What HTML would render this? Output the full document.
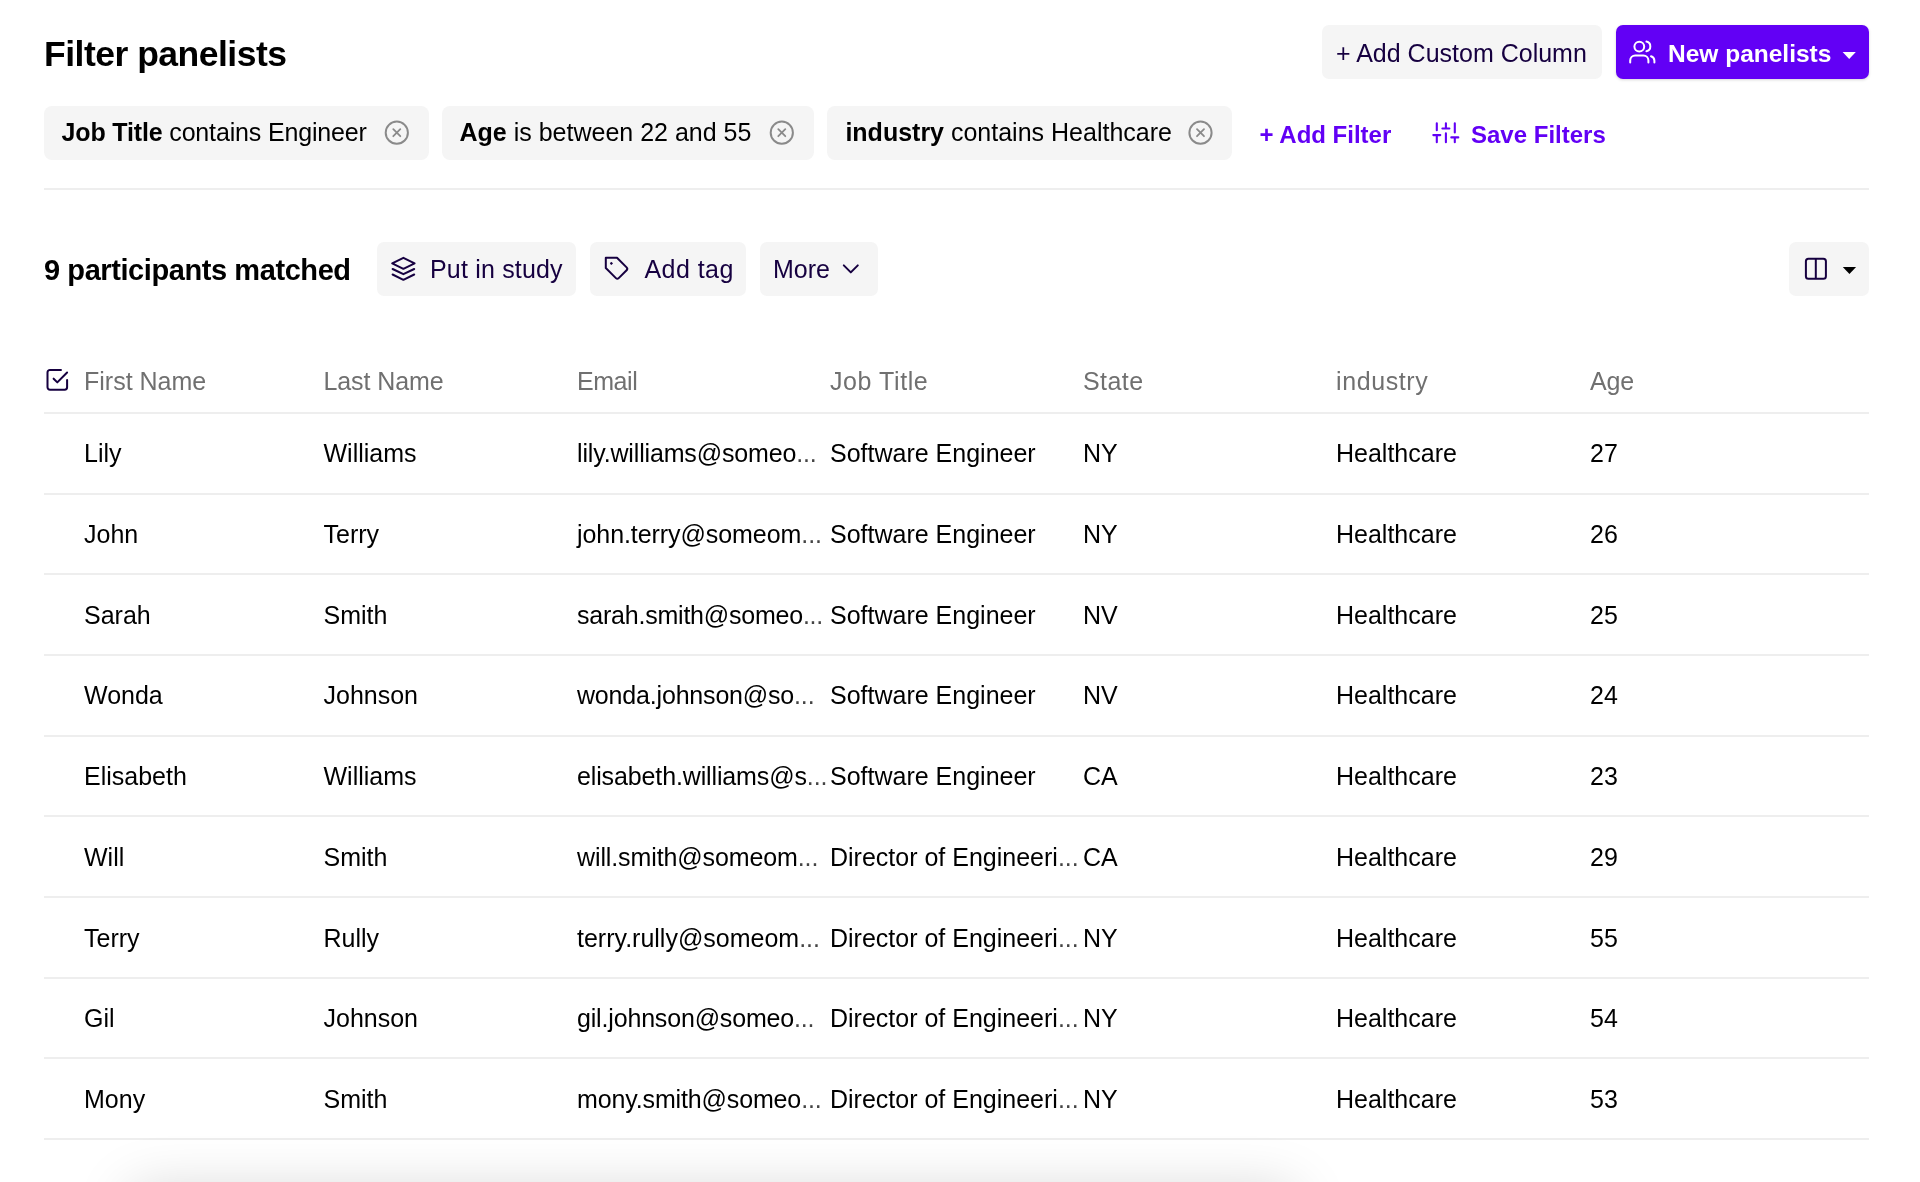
<!DOCTYPE html>
<html><head><meta charset='utf-8'><title>Filter panelists</title>
<style>
html,body{margin:0;padding:0;background:#fff;width:1920px;height:1182px;overflow:hidden;}
body{position:relative;font-family:"Liberation Sans",sans-serif;}
.t{position:absolute;white-space:nowrap;}
body{will-change:transform;}
.b{position:absolute;}
b{font-weight:700;}
</style></head><body>
<div class='t' style='left:44.00px;top:33.69px;font-size:35.5px;line-height:40px;color:#000;font-weight:700;letter-spacing:-0.5px;'>Filter panelists</div>
<div class='b' style='left:1321.50px;top:25.00px;width:280.20px;height:54.00px;background:#f5f5f5;border-radius:7px;'></div>
<div class='t' style='left:1336.00px;top:38.33px;font-size:25px;line-height:30px;color:#160040;'>+ Add Custom Column</div>
<div class='b' style='left:1615.50px;top:25.00px;width:253.80px;height:54.00px;background:#6200f5;border-radius:7px;box-shadow:0 1px 3px rgba(0,0,0,.16);'></div>
<svg class='b' style='left:1625px;top:36px' width='36' height='32' viewBox='1625 36 36 32' fill='none' stroke='#fff' stroke-width='2' stroke-linecap='round'>
<circle cx='1639.3' cy='46.6' r='4.9'/>
<path d='M1630.2 62.4v-1.8a5 5 0 0 1 5-5h8.2a5 5 0 0 1 5 5v1.8'/>
<path d='M1646.4 41.6a4.9 4.9 0 0 1 0 9.6'/>
<path d='M1651 56.2a5 5 0 0 1 3.4 4.6v1.6'/>
</svg>
<div class='t' style='left:1668.00px;top:38.51px;font-size:24.5px;line-height:30px;color:#fff;font-weight:700;'>New panelists</div>
<svg class='b' style='left:1842px;top:51px' width='15' height='9' viewBox='0 0 15 9'><path d='M0.6 0.9h13.2l-6.6 7.1z' fill='#fff'/></svg>
<div class='b' style='left:44.00px;top:106.00px;width:384.60px;height:54.00px;background:#f5f5f5;border-radius:8px;'></div>
<div class='t' style='left:61.60px;top:117.43px;font-size:25px;line-height:30px;color:#000;letter-spacing:-0.16px;'><b>Job Title</b> contains Engineer</div>
<svg class='b' style='left:383px;top:119px' width='26' height='26' viewBox='0 0 26 26' fill='none' stroke='#8a8a8a' stroke-width='2' stroke-linecap='round'><circle cx='13.80' cy='13.70' r='11.1'/><path stroke-width='1.8' d='M10.30 10.20l7 7M17.30 10.20l-7 7'/></svg>
<div class='b' style='left:442.00px;top:106.00px;width:371.75px;height:54.00px;background:#f5f5f5;border-radius:8px;'></div>
<div class='t' style='left:459.50px;top:117.43px;font-size:25px;line-height:30px;color:#000;'><b>Age</b> is between 22 and 55</div>
<svg class='b' style='left:768px;top:119px' width='26' height='26' viewBox='0 0 26 26' fill='none' stroke='#8a8a8a' stroke-width='2' stroke-linecap='round'><circle cx='13.80' cy='13.70' r='11.1'/><path stroke-width='1.8' d='M10.30 10.20l7 7M17.30 10.20l-7 7'/></svg>
<div class='b' style='left:827.30px;top:106.00px;width:404.70px;height:54.00px;background:#f5f5f5;border-radius:8px;'></div>
<div class='t' style='left:845.40px;top:117.43px;font-size:25px;line-height:30px;color:#000;'><b>industry</b> contains Healthcare</div>
<svg class='b' style='left:1187px;top:119px' width='26' height='26' viewBox='0 0 26 26' fill='none' stroke='#8a8a8a' stroke-width='2' stroke-linecap='round'><circle cx='13.50' cy='13.70' r='11.1'/><path stroke-width='1.8' d='M10.00 10.20l7 7M17.00 10.20l-7 7'/></svg>
<div class='t' style='left:1259.50px;top:120.08px;font-size:24px;line-height:30px;color:#6200f5;font-weight:700;'>+ Add Filter</div>
<svg class='b' style='left:1428px;top:118px' width='36' height='30' viewBox='1428 118 36 30' fill='none' stroke='#6200f5' stroke-width='2.1' stroke-linecap='round'>
<path d='M1436.8 123.2v7.1M1433.3 135.1h7M1436.8 135.1v7.1'/>
<path d='M1445.9 123.2v5.3M1442.4 128.5h7M1445.9 133.4v8.8'/>
<path d='M1454.8 123.2v9.2M1451.3 137.4h7M1454.8 137.4v4.8'/>
</svg>
<div class='t' style='left:1471.00px;top:120.08px;font-size:24px;line-height:30px;color:#6200f5;font-weight:700;'>Save Filters</div>
<div class='b' style='left:44.00px;top:188.00px;width:1825.00px;height:2.00px;background:#eeeeee;border-radius:0px;'></div>
<div class='t' style='left:44.00px;top:252.55px;font-size:29px;line-height:34px;color:#000;font-weight:700;letter-spacing:-0.42px;'>9 participants matched</div>
<div class='b' style='left:376.90px;top:242.00px;width:199.35px;height:53.60px;background:#f5f5f5;border-radius:7px;'></div>
<svg class='b' style='left:388px;top:253px' width='30' height='32' viewBox='388 253 30 32' fill='none' stroke='#160040' stroke-width='2' stroke-linejoin='round' stroke-linecap='round'>
<path d='M403.4 257.8l11.2 5.6l-11.2 5.4l-11.2-5.4z'/>
<path d='M392.6 269l10.8 5.2l10.8-5.2'/>
<path d='M392.6 274.5l10.8 5.3l10.8-5.3'/>
</svg>
<div class='t' style='left:430.00px;top:253.53px;font-size:25px;line-height:30px;color:#160040;letter-spacing:0.18px;'>Put in study</div>
<div class='b' style='left:590.30px;top:242.00px;width:155.70px;height:53.60px;background:#f5f5f5;border-radius:7px;'></div>
<svg class='b' style='left:600px;top:252px' width='32' height='32' viewBox='600 252 32 32' fill='none' stroke='#160040' stroke-width='2' stroke-linejoin='round'>
<path d='M605.8 257.8h11.2l9.6 9.6a2 2 0 0 1 0 2.8l-7.9 7.9a2 2 0 0 1 -2.8 0l-10.1-10.1z'/>
<circle cx='611.4' cy='263.4' r='0.9' fill='#160040' stroke-width='1'/>
</svg>
<div class='t' style='left:644.50px;top:253.53px;font-size:25px;line-height:30px;color:#160040;letter-spacing:0.45px;'>Add tag</div>
<div class='b' style='left:760.20px;top:242.00px;width:117.60px;height:53.60px;background:#f5f5f5;border-radius:7px;'></div>
<div class='t' style='left:773.00px;top:253.53px;font-size:25px;line-height:30px;color:#160040;'>More</div>
<svg class='b' style='left:840px;top:261px' width='22' height='16' viewBox='840 261 22 16' fill='none' stroke='#160040' stroke-width='2' stroke-linecap='round' stroke-linejoin='round'><path d='M843.8 265.4l7 7l7-7'/></svg>
<div class='b' style='left:1788.90px;top:242.00px;width:80.20px;height:53.70px;background:#f5f5f5;border-radius:7px;'></div>
<svg class='b' style='left:1802px;top:255px' width='28' height='28' viewBox='1802 255 28 28' fill='none' stroke='#160040' stroke-width='2'><rect x='1805.9' y='258.8' width='20' height='20' rx='2.5'/><path d='M1815.8 258.8v20'/></svg>
<svg class='b' style='left:1842px;top:266px' width='15' height='9' viewBox='0 0 15 9'><path d='M0.8 1h13.3l-6.65 7.1z' fill='#000'/></svg>
<svg class='b' style='left:42px;top:364px' width='32' height='32' viewBox='42 364 32 32' fill='none' stroke='#160040' stroke-width='1.65' stroke-linecap='round' stroke-linejoin='round'><g transform='translate(42.6 365.2) scale(1.225)'><path d='M9 11l3 3l8 -8'/><path d='M20 12v6a2 2 0 0 1 -2 2h-12a2 2 0 0 1 -2 -2v-12a2 2 0 0 1 2 -2h9'/></g></svg>
<div class='t' style='left:84.00px;top:366.33px;font-size:25px;line-height:30px;color:#707070;'>First Name</div>
<div class='t' style='left:323.50px;top:366.33px;font-size:25px;line-height:30px;color:#707070;letter-spacing:-0.1px;'>Last Name</div>
<div class='t' style='left:577.00px;top:366.33px;font-size:25px;line-height:30px;color:#707070;letter-spacing:-0.45px;'>Email</div>
<div class='t' style='left:830.00px;top:366.33px;font-size:25px;line-height:30px;color:#707070;letter-spacing:0.58px;'>Job Title</div>
<div class='t' style='left:1083.00px;top:366.33px;font-size:25px;line-height:30px;color:#707070;letter-spacing:0.45px;'>State</div>
<div class='t' style='left:1336.00px;top:366.33px;font-size:25px;line-height:30px;color:#707070;letter-spacing:0.6px;'>industry</div>
<div class='t' style='left:1590.00px;top:366.33px;font-size:25px;line-height:30px;color:#707070;letter-spacing:-0.2px;'>Age</div>
<div class='b' style='left:44.00px;top:412.00px;width:1825.00px;height:2.00px;background:#eeeeee;border-radius:0px;'></div>
<div class='t' style='left:84.00px;top:438.43px;font-size:25px;line-height:30px;color:#000;'>Lily</div>
<div class='t' style='left:323.50px;top:438.43px;font-size:25px;line-height:30px;color:#000;'>Williams</div>
<div class='t' style='left:577.00px;top:438.43px;font-size:25px;line-height:30px;color:#000;letter-spacing:-0.157px;'>lily.williams@someo<span style='color:#444'>...</span></div>
<div class='t' style='left:830.00px;top:438.43px;font-size:25px;line-height:30px;color:#000;'>Software Engineer</div>
<div class='t' style='left:1083.00px;top:438.43px;font-size:25px;line-height:30px;color:#000;'>NY</div>
<div class='t' style='left:1336.00px;top:438.43px;font-size:25px;line-height:30px;color:#000;'>Healthcare</div>
<div class='t' style='left:1590.00px;top:438.43px;font-size:25px;line-height:30px;color:#000;'>27</div>
<div class='b' style='left:44.00px;top:493.00px;width:1825.00px;height:2.00px;background:#eeeeee;border-radius:0px;'></div>
<div class='t' style='left:84.00px;top:519.11px;font-size:25px;line-height:30px;color:#000;'>John</div>
<div class='t' style='left:323.50px;top:519.11px;font-size:25px;line-height:30px;color:#000;'>Terry</div>
<div class='t' style='left:577.00px;top:519.11px;font-size:25px;line-height:30px;color:#000;letter-spacing:-0.07px;'>john.terry@someom<span style='color:#444'>...</span></div>
<div class='t' style='left:830.00px;top:519.11px;font-size:25px;line-height:30px;color:#000;'>Software Engineer</div>
<div class='t' style='left:1083.00px;top:519.11px;font-size:25px;line-height:30px;color:#000;'>NY</div>
<div class='t' style='left:1336.00px;top:519.11px;font-size:25px;line-height:30px;color:#000;'>Healthcare</div>
<div class='t' style='left:1590.00px;top:519.11px;font-size:25px;line-height:30px;color:#000;'>26</div>
<div class='b' style='left:44.00px;top:573.00px;width:1825.00px;height:2.00px;background:#eeeeee;border-radius:0px;'></div>
<div class='t' style='left:84.00px;top:599.79px;font-size:25px;line-height:30px;color:#000;'>Sarah</div>
<div class='t' style='left:323.50px;top:599.79px;font-size:25px;line-height:30px;color:#000;'>Smith</div>
<div class='t' style='left:577.00px;top:599.79px;font-size:25px;line-height:30px;color:#000;letter-spacing:-0.22px;'>sarah.smith@someo<span style='color:#444'>...</span></div>
<div class='t' style='left:830.00px;top:599.79px;font-size:25px;line-height:30px;color:#000;'>Software Engineer</div>
<div class='t' style='left:1083.00px;top:599.79px;font-size:25px;line-height:30px;color:#000;'>NV</div>
<div class='t' style='left:1336.00px;top:599.79px;font-size:25px;line-height:30px;color:#000;'>Healthcare</div>
<div class='t' style='left:1590.00px;top:599.79px;font-size:25px;line-height:30px;color:#000;'>25</div>
<div class='b' style='left:44.00px;top:654.00px;width:1825.00px;height:2.00px;background:#eeeeee;border-radius:0px;'></div>
<div class='t' style='left:84.00px;top:680.47px;font-size:25px;line-height:30px;color:#000;'>Wonda</div>
<div class='t' style='left:323.50px;top:680.47px;font-size:25px;line-height:30px;color:#000;'>Johnson</div>
<div class='t' style='left:577.00px;top:680.47px;font-size:25px;line-height:30px;color:#000;letter-spacing:-0.18px;'>wonda.johnson@so<span style='color:#444'>...</span></div>
<div class='t' style='left:830.00px;top:680.47px;font-size:25px;line-height:30px;color:#000;'>Software Engineer</div>
<div class='t' style='left:1083.00px;top:680.47px;font-size:25px;line-height:30px;color:#000;'>NV</div>
<div class='t' style='left:1336.00px;top:680.47px;font-size:25px;line-height:30px;color:#000;'>Healthcare</div>
<div class='t' style='left:1590.00px;top:680.47px;font-size:25px;line-height:30px;color:#000;'>24</div>
<div class='b' style='left:44.00px;top:735.00px;width:1825.00px;height:2.00px;background:#eeeeee;border-radius:0px;'></div>
<div class='t' style='left:84.00px;top:761.15px;font-size:25px;line-height:30px;color:#000;'>Elisabeth</div>
<div class='t' style='left:323.50px;top:761.15px;font-size:25px;line-height:30px;color:#000;'>Williams</div>
<div class='t' style='left:577.00px;top:761.15px;font-size:25px;line-height:30px;color:#000;letter-spacing:-0.13px;'>elisabeth.williams@s<span style='color:#444'>...</span></div>
<div class='t' style='left:830.00px;top:761.15px;font-size:25px;line-height:30px;color:#000;'>Software Engineer</div>
<div class='t' style='left:1083.00px;top:761.15px;font-size:25px;line-height:30px;color:#000;'>CA</div>
<div class='t' style='left:1336.00px;top:761.15px;font-size:25px;line-height:30px;color:#000;'>Healthcare</div>
<div class='t' style='left:1590.00px;top:761.15px;font-size:25px;line-height:30px;color:#000;'>23</div>
<div class='b' style='left:44.00px;top:815.00px;width:1825.00px;height:2.00px;background:#eeeeee;border-radius:0px;'></div>
<div class='t' style='left:84.00px;top:841.83px;font-size:25px;line-height:30px;color:#000;'>Will</div>
<div class='t' style='left:323.50px;top:841.83px;font-size:25px;line-height:30px;color:#000;'>Smith</div>
<div class='t' style='left:577.00px;top:841.83px;font-size:25px;line-height:30px;color:#000;letter-spacing:-0.11px;'>will.smith@someom<span style='color:#444'>...</span></div>
<div class='t' style='left:830.00px;top:841.83px;font-size:25px;line-height:30px;color:#000;'>Director of Engineeri<span style='color:#444'>...</span></div>
<div class='t' style='left:1083.00px;top:841.83px;font-size:25px;line-height:30px;color:#000;'>CA</div>
<div class='t' style='left:1336.00px;top:841.83px;font-size:25px;line-height:30px;color:#000;'>Healthcare</div>
<div class='t' style='left:1590.00px;top:841.83px;font-size:25px;line-height:30px;color:#000;'>29</div>
<div class='b' style='left:44.00px;top:896.00px;width:1825.00px;height:2.00px;background:#eeeeee;border-radius:0px;'></div>
<div class='t' style='left:84.00px;top:922.51px;font-size:25px;line-height:30px;color:#000;'>Terry</div>
<div class='t' style='left:323.50px;top:922.51px;font-size:25px;line-height:30px;color:#000;'>Rully</div>
<div class='t' style='left:577.00px;top:922.51px;font-size:25px;line-height:30px;color:#000;'>terry.rully@someom<span style='color:#444'>...</span></div>
<div class='t' style='left:830.00px;top:922.51px;font-size:25px;line-height:30px;color:#000;'>Director of Engineeri<span style='color:#444'>...</span></div>
<div class='t' style='left:1083.00px;top:922.51px;font-size:25px;line-height:30px;color:#000;'>NY</div>
<div class='t' style='left:1336.00px;top:922.51px;font-size:25px;line-height:30px;color:#000;'>Healthcare</div>
<div class='t' style='left:1590.00px;top:922.51px;font-size:25px;line-height:30px;color:#000;'>55</div>
<div class='b' style='left:44.00px;top:977.00px;width:1825.00px;height:2.00px;background:#eeeeee;border-radius:0px;'></div>
<div class='t' style='left:84.00px;top:1003.19px;font-size:25px;line-height:30px;color:#000;'>Gil</div>
<div class='t' style='left:323.50px;top:1003.19px;font-size:25px;line-height:30px;color:#000;'>Johnson</div>
<div class='t' style='left:577.00px;top:1003.19px;font-size:25px;line-height:30px;color:#000;letter-spacing:-0.17px;'>gil.johnson@someo<span style='color:#444'>...</span></div>
<div class='t' style='left:830.00px;top:1003.19px;font-size:25px;line-height:30px;color:#000;'>Director of Engineeri<span style='color:#444'>...</span></div>
<div class='t' style='left:1083.00px;top:1003.19px;font-size:25px;line-height:30px;color:#000;'>NY</div>
<div class='t' style='left:1336.00px;top:1003.19px;font-size:25px;line-height:30px;color:#000;'>Healthcare</div>
<div class='t' style='left:1590.00px;top:1003.19px;font-size:25px;line-height:30px;color:#000;'>54</div>
<div class='b' style='left:44.00px;top:1057.00px;width:1825.00px;height:2.00px;background:#eeeeee;border-radius:0px;'></div>
<div class='t' style='left:84.00px;top:1083.87px;font-size:25px;line-height:30px;color:#000;'>Mony</div>
<div class='t' style='left:323.50px;top:1083.87px;font-size:25px;line-height:30px;color:#000;'>Smith</div>
<div class='t' style='left:577.00px;top:1083.87px;font-size:25px;line-height:30px;color:#000;letter-spacing:-0.14px;'>mony.smith@someo<span style='color:#444'>...</span></div>
<div class='t' style='left:830.00px;top:1083.87px;font-size:25px;line-height:30px;color:#000;'>Director of Engineeri<span style='color:#444'>...</span></div>
<div class='t' style='left:1083.00px;top:1083.87px;font-size:25px;line-height:30px;color:#000;'>NY</div>
<div class='t' style='left:1336.00px;top:1083.87px;font-size:25px;line-height:30px;color:#000;'>Healthcare</div>
<div class='t' style='left:1590.00px;top:1083.87px;font-size:25px;line-height:30px;color:#000;'>53</div>
<div class='b' style='left:44.00px;top:1138.00px;width:1825.00px;height:2.00px;background:#eeeeee;border-radius:0px;'></div>
<div class='b' style='left:130px;top:1190px;width:1165px;height:80px;background:#fff;border-radius:12px;box-shadow:0 0 56px rgba(0,0,0,.17)'></div>
</body></html>
